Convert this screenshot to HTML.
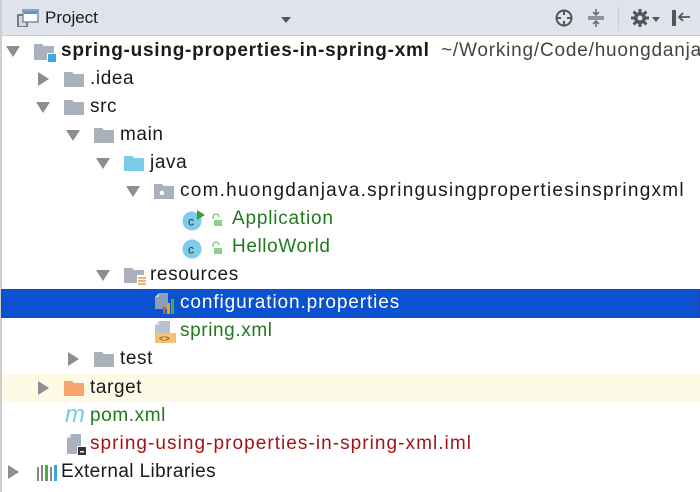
<!DOCTYPE html>
<html><head><meta charset="utf-8"><style>
html,body{margin:0;padding:0}
body{width:700px;height:492px;overflow:hidden;background:#fff;font-family:"Liberation Sans",Helvetica,Arial,sans-serif;position:relative;font-size:19px;letter-spacing:0.6px;color:#1a1a1a}
.hdr{position:absolute;left:0;top:0;width:700px;height:35px;background:#dfe3eb;border-bottom:1px solid #c4c8d0;letter-spacing:0}
.lb{position:absolute;left:0;top:0;width:2px;height:492px;background:#cfcfcf}
.row{position:absolute;left:2px;width:698px;height:28px}
.t{position:absolute;top:0;line-height:28px;white-space:nowrap}
.a{position:absolute;width:0;height:0}
.ad{border-left:7px solid transparent;border-right:7px solid transparent;border-top:11px solid #8e8e8e;top:9px}
.ar{border-top:7px solid transparent;border-bottom:7px solid transparent;border-left:11px solid #8e8e8e;top:7px}
svg{position:absolute}
.g{color:#207a1d}
</style></head><body>
<div class="hdr">
<svg style="left:16px;top:9px" width="24" height="20" viewBox="0 0 24 20"><rect x="1" y="5" width="11" height="13" fill="#7d7d7d"/><rect x="3" y="7" width="7" height="10" fill="#d8d8d8"/><rect x="7" y="1" width="15" height="12" fill="#fff" stroke="#6d8fb8" stroke-width="1.5"/><rect x="8" y="2" width="13" height="3" fill="#6d8fb8"/></svg>
<div class="t" style="left:45px;top:3px;line-height:30px;font-size:17px">Project</div>
<div class="a" style="left:281px;top:17px;border-left:5px solid transparent;border-right:5px solid transparent;border-top:6px solid #555"></div>
<svg style="left:554px;top:8px" width="20" height="20" viewBox="0 0 20 20"><circle cx="10" cy="10" r="7.5" fill="none" stroke="#555" stroke-width="2"/><path d="M10 2v5M10 13v5M2 10h5M13 10h5" stroke="#555" stroke-width="2"/></svg>
<svg style="left:586px;top:8px" width="20" height="20" viewBox="0 0 20 20"><path d="M2 9h16M2 11h16" stroke="#666" stroke-width="1.2"/><path d="M10 1v6M7 4l3 3 3-3M10 19v-6M7 16l3-3 3 3" stroke="#666" stroke-width="1.5" fill="none"/></svg>
<div style="position:absolute;left:618px;top:6px;width:1px;height:24px;background:#c8ccd4"></div>
<svg style="left:630px;top:8px" width="20" height="20" viewBox="0 0 20 20"><circle cx="10" cy="10" r="6" fill="#555"/><path d="M10 1v18M1 10h18M3.6 3.6l12.8 12.8M16.4 3.6L3.6 16.4" stroke="#555" stroke-width="3"/><circle cx="10" cy="10" r="2.5" fill="#dfe3eb"/></svg>
<div class="a" style="left:652px;top:17px;border-left:4px solid transparent;border-right:4px solid transparent;border-top:5px solid #555"></div>
<svg style="left:670px;top:8px" width="22" height="20" viewBox="0 0 22 20"><rect x="2" y="2" width="4" height="16" fill="#555"/><path d="M9 9h11M13 5l-4 4 4 4" stroke="#555" stroke-width="1.8" fill="none"/></svg>
</div>
<div class="lb"></div>

<div class="row" style="top:37px">
<div class="a ad" style="left:4px"></div>
<svg style="left:32px;top:5px" width="24" height="22"><path d="M0 2h8l2 2h10v14H0z" fill="#a9b2bc"/><rect x="13" y="11" width="10" height="10" fill="#fff"/><rect x="14" y="12" width="8" height="8" fill="#3fa6dd"/></svg>
<div class="t" style="left:59px;font-weight:bold;letter-spacing:0.75px">spring-using-properties-in-spring-xml</div>
<div class="t" style="left:439px;color:#444;letter-spacing:0.8px">~/Working/Code/huongdanjava</div>
</div>
<div class="row" style="top:65px"><div class="a ar" style="left:36px"></div>
<svg style="left:62px;top:6px" width="22" height="18"><path d="M0 1h8l2 2h10v13H0z" fill="#a9b2bc"/></svg>
<div class="t" style="left:88px">.idea</div></div>
<div class="row" style="top:93px"><div class="a ad" style="left:34px"></div>
<svg style="left:62px;top:6px" width="22" height="18"><path d="M0 1h8l2 2h10v13H0z" fill="#a9b2bc"/></svg>
<div class="t" style="left:88px">src</div></div>
<div class="row" style="top:121px"><div class="a ad" style="left:64px"></div>
<svg style="left:92px;top:6px" width="22" height="18"><path d="M0 1h8l2 2h10v13H0z" fill="#a9b2bc"/></svg>
<div class="t" style="left:118px">main</div></div>
<div class="row" style="top:149px"><div class="a ad" style="left:94px"></div>
<svg style="left:122px;top:6px" width="22" height="18"><path d="M0 1h8l2 2h10v13H0z" fill="#7ccbe8"/></svg>
<div class="t" style="left:148px">java</div></div>
<div class="row" style="top:177px"><div class="a ad" style="left:124px"></div>
<svg style="left:152px;top:6px" width="22" height="18"><path d="M0 1h8l2 2h10v13H0z" fill="#a9b2bc"/><circle cx="8" cy="10" r="2.2" fill="#fff"/></svg>
<div class="t" style="left:178px;letter-spacing:1.25px">com.huongdanjava.springusingpropertiesinspringxml</div></div>
<div class="row" style="top:205px">
<svg style="left:180px;top:4px" width="26" height="22"><circle cx="10" cy="12" r="9.5" fill="#7fcbea"/><text x="6" y="16.5" font-size="12" font-family="Liberation Sans" fill="#333" letter-spacing="0">c</text><path d="M15 1v10l8-5z" fill="#3aa031"/></svg>
<svg style="left:208px;top:8px" width="14" height="14"><path d="M3 6V4a3 3 0 0 1 6 0" stroke="#8fcf8a" stroke-width="1.6" fill="none"/><rect x="4" y="7" width="8" height="6" fill="#8fcf8a"/></svg>
<div class="t g" style="left:230px;letter-spacing:0.8px">Application</div></div>
<div class="row" style="top:233px">
<svg style="left:180px;top:4px" width="26" height="22"><circle cx="10" cy="12" r="9.5" fill="#7fcbea"/><text x="6" y="16.5" font-size="12" font-family="Liberation Sans" fill="#333" letter-spacing="0">c</text></svg>
<svg style="left:208px;top:8px" width="14" height="14"><path d="M3 6V4a3 3 0 0 1 6 0" stroke="#8fcf8a" stroke-width="1.6" fill="none"/><rect x="4" y="7" width="8" height="6" fill="#8fcf8a"/></svg>
<div class="t g" style="left:230px">HelloWorld</div></div>
<div class="row" style="top:261px"><div class="a ad" style="left:94px"></div>
<svg style="left:122px;top:6px" width="26" height="22"><path d="M0 1h8l2 2h10v13H0z" fill="#a9b2bc"/><rect x="13" y="8" width="10" height="12" fill="#fff"/><path d="M14 11h8M14 14h8M14 17h8" stroke="#e08a1e" stroke-width="1.3"/></svg>
<div class="t" style="left:148px">resources</div></div>
<div class="row" style="top:289px;left:1px;width:697px;height:27px;background:#0b52d1;border:1px solid #2a40c0"></div>
<div class="row" style="top:289px">
<svg style="left:152px;top:3px" width="22" height="24"><path d="M5 1h9v16H1V5z" fill="#8c9fb6"/><path d="M1 5h4V1z" fill="#c9d2dc"/><rect x="9" y="15" width="3" height="7" fill="#e64b2b"/><rect x="13" y="11" width="3" height="11" fill="#f1a21d"/><rect x="17" y="7" width="3" height="15" fill="#4caf3b"/></svg>
<div class="t" style="left:178px;color:#fff;letter-spacing:0.9px">configuration.properties</div></div>
<div class="row" style="top:317px">
<svg style="left:152px;top:3px" width="24" height="24"><path d="M5 1h11v12H1V5z" fill="#b9c1ca"/><path d="M1 5h4V1z" fill="#e0e4e8"/><rect x="1" y="13" width="21" height="10" fill="#f6c26c"/><text x="5" y="21.5" font-size="9" font-family="Liberation Mono" fill="#333" letter-spacing="0">&lt;&gt;</text></svg>
<div class="t g" style="left:178px">spring.xml</div></div>
<div class="row" style="top:345px"><div class="a ar" style="left:66px"></div>
<svg style="left:92px;top:6px" width="22" height="18"><path d="M0 1h8l2 2h10v13H0z" fill="#a9b2bc"/></svg>
<div class="t" style="left:118px">test</div></div>
<div class="row" style="top:374px;background:#fdfbe5;left:2px"><div class="a ar" style="left:36px"></div>
<svg style="left:62px;top:6px" width="22" height="18"><path d="M0 1h8l2 2h10v13H0z" fill="#f5a66f"/></svg>
<div class="t" style="left:88px">target</div></div>
<div class="row" style="top:402px">
<div class="t" style="left:63px;font-style:italic;color:#73c9ea;font-size:24px;line-height:26px;letter-spacing:0">m</div>
<div class="t g" style="left:88px">pom.xml</div></div>
<div class="row" style="top:430px">
<svg style="left:64px;top:3px" width="24" height="24"><path d="M5 1h10v20H1V5z" fill="#a9b2bc"/><path d="M1 5h4V1z" fill="#dde1e5"/><rect x="11" y="13" width="10" height="10" fill="#fff"/><rect x="12" y="14" width="8" height="8" fill="#333"/><rect x="14" y="18" width="4" height="1.5" fill="#fff"/></svg>
<div class="t" style="left:88px;color:#a31515;letter-spacing:1.05px">spring-using-properties-in-spring-xml.iml</div></div>
<div class="row" style="top:458px"><div class="a ar" style="left:6px"></div>
<svg style="left:34px;top:5px" width="22" height="20"><rect x="1" y="4" width="2" height="14" fill="#888"/><rect x="5" y="2" width="2" height="16" fill="#888"/><rect x="9" y="2" width="3" height="16" fill="#4caf3b"/><rect x="14" y="4" width="2" height="14" fill="#888"/><rect x="18" y="2" width="3" height="16" fill="#3fa6dd"/></svg>
<div class="t" style="left:59px;letter-spacing:0.4px">External Libraries</div></div>
</body></html>
